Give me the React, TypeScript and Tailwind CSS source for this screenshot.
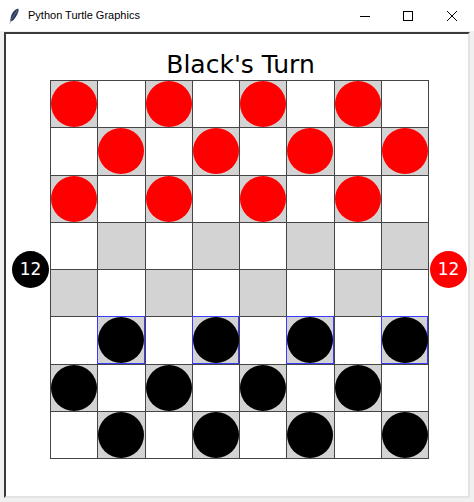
import React from "react";

type Piece = "red" | "black" | null;

// 8x8 board: red on the top three rows, black on the bottom three, dark squares only
const board: Piece[][] = Array.from({ length: 8 }, (_, r) =>
  Array.from({ length: 8 }, (_, c) => {
    if ((r + c) % 2 !== 0) return null;
    if (r < 3) return "red";
    if (r > 4) return "black";
    return null;
  })
);

// pieces that can move this turn get a blue outline
const movable = (r: number, c: number) => r === 5 && (r + c) % 2 === 0;

function Feather() {
  return (
    <svg width="10" height="16" viewBox="0 0 10 16" className="shrink-0">
      <path d="M9.4 0.4 C5.6 1.2 2.8 4.6 1.8 9 L1.2 13 L3 13.2 C6 10.8 8.2 7.4 9.6 2.8 Z" fill="#2a3857" />
      <path d="M0.8 15.6 L2.2 11.4 L8.4 2.2" stroke="#7d8bab" strokeWidth="0.7" fill="none" />
    </svg>
  );
}

function TitleBar() {
  return (
    <div className="flex h-[31px] items-center bg-white">
      <div className="ml-[9px] flex w-[19px] items-center">
        <Feather />
      </div>
      <span className="text-[11px] text-black" style={{ fontFamily: '"Liberation Sans", Arial, sans-serif' }}>
        Python Turtle Graphics
      </span>
      <div className="ml-auto flex h-full items-center">
        <div className="flex h-full w-[40px] items-center justify-center">
          <svg width="10" height="10" viewBox="0 0 10 10">
            <path d="M0 5.5 H10" stroke="#000" strokeWidth="1" />
          </svg>
        </div>
        <div className="flex h-full w-[45px] items-center justify-center">
          <svg width="10" height="10" viewBox="0 0 10 10">
            <rect x="0.5" y="0.5" width="9" height="9" stroke="#000" strokeWidth="1" fill="none" />
          </svg>
        </div>
        <div className="flex h-full w-[44px] items-center justify-center">
          <svg width="10" height="10" viewBox="0 0 10 10">
            <path d="M0 0 L10 10 M10 0 L0 10" stroke="#000" strokeWidth="1" />
          </svg>
        </div>
      </div>
    </div>
  );
}

function Score({ color }: { color: "red" | "black" }) {
  return (
    <div
      className={`flex h-[37px] w-[37px] items-center justify-center rounded-full text-[17px] text-white ${
        color === "red" ? "bg-[#ff0000]" : "bg-black"
      }`}
    >
      12
    </div>
  );
}

function Board() {
  return (
    <div className="grid h-[379px] w-[379px] grid-cols-8 grid-rows-8 border-l border-t border-[#454545]">
      {board.map((row, r) =>
        row.map((piece, c) => (
          <div
            key={`${r}-${c}`}
            className={`flex items-center justify-center border-b border-r border-[#454545] ${
              (r + c) % 2 === 0 ? "bg-[#d3d3d3]" : "bg-white"
            } ${movable(r, c) ? "shadow-[-1px_-1px_0_0_#3b3bff,inset_-1px_-1px_0_0_#3b3bff]" : ""}`}
          >
            {piece && (
              <div
                className={`h-[46px] w-[46px] shrink-0 rounded-full ${
                  piece === "red" ? "bg-[#ff0000]" : "bg-black"
                }`}
              />
            )}
          </div>
        ))
      )}
    </div>
  );
}

export default function App() {
  return (
    <div className="h-[502px] w-[474px] overflow-hidden bg-[#f0f0f0]" style={{ fontFamily: '"DejaVu Sans", Verdana, sans-serif' }}>
      <TitleBar />
      <div className="pl-[4px] pt-px">
        <div className="h-[466px] w-[466px] border-2 border-b-[#e3e3e3] border-l-[#3a3a3a] border-r-[#e3e3e3] border-t-[#3a3a3a] bg-white">
          <div className="pl-[6px] pt-[16px]">
            <div className="w-[455px]">
              <h1 className="ml-[39px] w-[379px] text-center text-[25px] leading-[30px] font-normal text-black">
                Black's Turn
              </h1>
              <div className="flex items-center">
                <Score color="black" />
                <div className="ml-px">
                  <Board />
                </div>
                <div className="ml-px">
                  <Score color="red" />
                </div>
              </div>
            </div>
          </div>
        </div>
      </div>
    </div>
  );
}
